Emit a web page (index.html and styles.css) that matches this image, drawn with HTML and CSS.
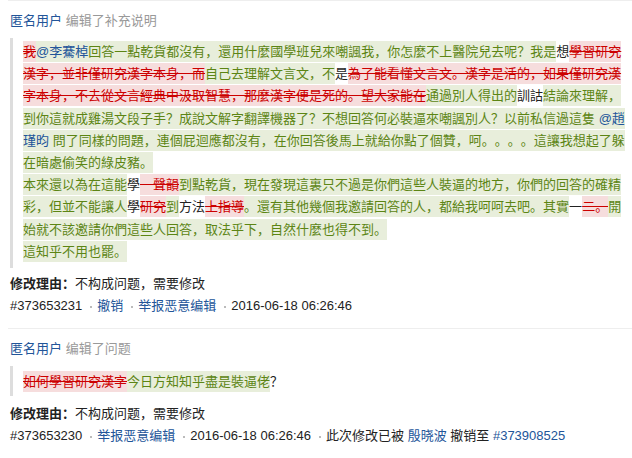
FILE: index.html
```html
<!DOCTYPE html>
<html lang="zh-CN">
<head>
    <meta charset="UTF-8">
    <meta name="viewport" content="width=device-width, initial-scale=1.0">
    <title>编辑记录</title>
    <link rel="stylesheet" href="styles.css">
</head>
<body>
    <div class="log-list">
        <div class="log-item">
            <div class="log-head"><a href="#">匿名用户</a> <span class="log-action">编辑了补充说明</span></div>
            <blockquote class="log-diff"><del>我</del><ins><a href="#">@李騫棹</a>回答一點乾貨都沒有，還用什麼國學班兒來嘲諷我，你怎麼不上醫院兒去呢？我是</ins>想<del>學習研究漢字，並非僅研究漢字本身，而</del><ins>自己去理解文言文，不</ins>是<del>為了能看懂文言文。漢字是活的，如果僅研究漢字本身，不去從文言經典中汲取智慧，那麼漢字便是死的。望大家能在</del><ins>通過別人得出的</ins>訓詁<ins>結論來理解，到你這就成雞湯文段子手？成說文解字翻譯機器了？不想回答何必裝逼來嘲諷別人？以前私信過這隻 <a href="#">@趙瑾昀</a> 問了同樣的問題，連個屁迴應都沒有，在你回答後馬上就給你點了個贊，呵。。。。這讓我想起了躲在暗處偷笑的綠皮豬。<br>本來還以為在這能</ins>學<del>一聲韻</del><ins>到點乾貨，現在發現這裏只不過是你們這些人裝逼的地方，你們的回答的確精彩，但並不能讓人</ins>學<del>研究</del><ins>到</ins>方法<del>上指導</del><ins>。還有其他幾個我邀請回答的人，都給我呵呵去吧。其實</ins>一<del>二。</del><ins>開始就不該邀請你們這些人回答，取法乎下，自然什麼也得不到。<br>這知乎不用也罷。</ins></blockquote>
            <div class="log-reason"><strong>修改理由：</strong>不构成问题，需要修改</div>
            <div class="log-meta">#373653231<span class="bull"></span><a href="#">撤销</a><span class="bull"></span><a href="#">举报恶意编辑</a><span class="bull"></span>2016-06-18 06:26:46</div>
        </div>
        <div class="log-item log-item-title">
            <div class="log-head"><a href="#">匿名用户</a> <span class="log-action">编辑了问题</span></div>
            <blockquote class="log-diff"><del>如何學習研究漢字</del><ins>今日方知知乎盡是裝逼佬</ins>？</blockquote>
            <div class="log-reason"><strong>修改理由：</strong>不构成问题，需要修改</div>
            <div class="log-meta">#373653230<span class="bull"></span><a href="#">举报恶意编辑</a><span class="bull"></span>2016-06-18 06:26:46<span class="bull"></span>此次修改已被 <a href="#">殷晓波</a> 撤销至 <a href="#">#373908525</a></div>
        </div>
    </div>
</body>
</html>
```

FILE: styles.css
```css
body { margin: 0; font-family: "Liberation Sans", "Noto Sans CJK SC", sans-serif; font-size: 13px; line-height: 22px; color: #222; background: #fff; text-spacing-trim: space-all; }
a { color: #259; text-decoration: none; }

.log-list { margin-left: 8px; }
.log-item { border-top: 1px solid #eee; padding: 9px 0 11px 2px; }
.log-action { color: #999; }

.log-diff { margin: 6px 0 0 0; width: 606px; padding: 3px 0 5px 10px; border-left: 3px solid #ddd; line-height: 22.2px; }
.log-diff ins { color: #5c8514; background: #e8eedb; text-decoration: none; padding: 3px 0; }
.log-diff del { color: #c00; background: #f6dddd; text-decoration: line-through; padding: 3px 0; }

.log-reason { margin-top: 5px; }
.log-reason strong { font-weight: bold; }

/* the question title diff sits a little lower in its bar */
.log-item-title .log-diff { padding-top: 5px; padding-bottom: 3px; }
.log-item-title .log-reason { margin-top: 7px; }

.bull { display: inline-block; width: 2px; height: 2px; background: #bbb; vertical-align: middle; margin: 0 5px 0 8px; }
```
